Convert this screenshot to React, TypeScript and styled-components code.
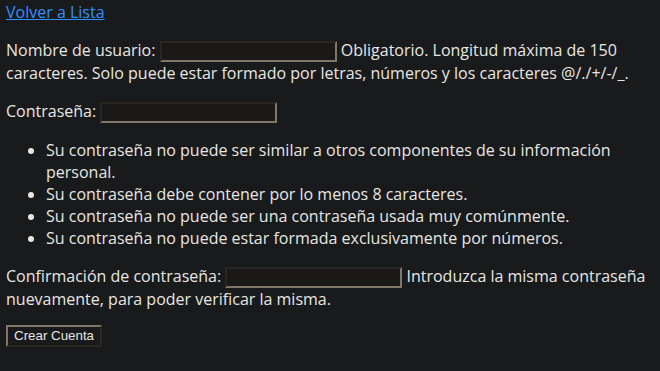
import React from "react";
import styled, { createGlobalStyle } from "styled-components";

const Global = createGlobalStyle`
  html, body { margin: 0; padding: 0; background: #181a1b; }
  body {
    color: #e8e6e3;
    font-family: "Open Sans", "Noto Sans", sans-serif;
    font-size: 16px;
  }
`;

const Page = styled.div`
  padding: 1px 6px 0 6px;
`;

const BackLink = styled.a`
  color: #3391ff;
  text-decoration: underline;
`;

const Para = styled.p<{ $mb?: number }>`
  margin: 16px 0 ${(p) => p.$mb ?? 16}px 0;
`;

const Field = styled.input`
  box-sizing: border-box;
  width: 177px;
  height: 21px;
  background: #1a1918;
  color: #e8e6e3;
  border-style: solid;
  border-width: 2px;
  border-color: #2a2723 #807768 #807768 #2a2723;
  padding: 1px 2px;
  font-family: "Liberation Sans", Arial, sans-serif;
  font-size: 13.33px;
  vertical-align: baseline;
  margin: 0;
`;

const Rules = styled.ul`
  margin: 16px 0;
  padding-left: 40px;
`;

const Button = styled.button`
  box-sizing: border-box;
  height: 22px;
  background: #181a1b;
  color: #e8e6e3;
  font-family: "Liberation Sans", Arial, sans-serif;
  font-size: 13.33px;
  padding: 1px 6px;
  border-style: solid;
  border-width: 2px;
  border-color: #807768 #2a2723 #2a2723 #807768;
  margin: 0;
`;

export default function App() {
  return (
    <>
      <Global />
      <Page>
        <BackLink href="#">Volver a Lista</BackLink>
        <form onSubmit={(e) => e.preventDefault()}>
          <Para>
            <label>Nombre de usuario:</label> <Field type="text" />{" "}
            <span>
              Obligatorio. Longitud máxima de 150 caracteres. Solo puede estar
              formado por letras, números y los caracteres @/./+/-/_.
            </span>
          </Para>
          <Para>
            <label>Contraseña:</label> <Field type="password" />
          </Para>
          <Rules>
            <li>
              Su contraseña no puede ser similar a otros componentes de su
              información personal.
            </li>
            <li>Su contraseña debe contener por lo menos 8 caracteres.</li>
            <li>Su contraseña no puede ser una contraseña usada muy comúnmente.</li>
            <li>Su contraseña no puede estar formada exclusivamente por números.</li>
          </Rules>
          <Para $mb={13}>
            <label>Confirmación de contraseña:</label> <Field type="password" />{" "}
            <span>
              Introduzca la misma contraseña nuevamente, para poder verificar la
              misma.
            </span>
          </Para>
          <Button type="submit">Crear Cuenta</Button>
        </form>
      </Page>
    </>
  );
}
